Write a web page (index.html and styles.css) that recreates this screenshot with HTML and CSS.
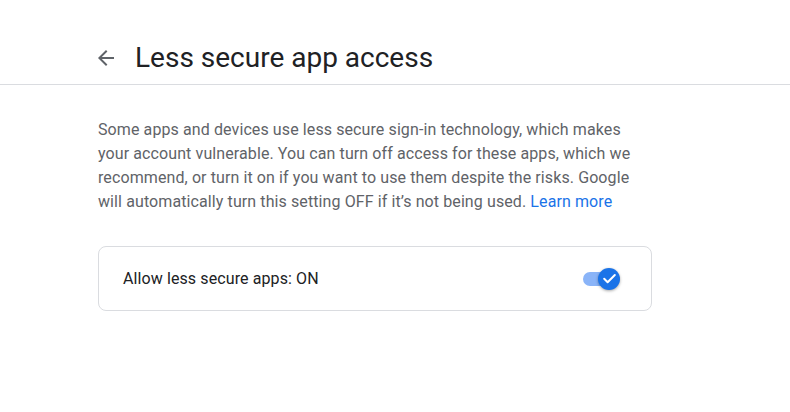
FILE: index.html
```html
<!DOCTYPE html>
<html>
<head>
<meta charset="utf-8">
<link rel="stylesheet" href="styles.css">
</head>
<body>
<header class="header">
  <div class="header-inner">
    <svg class="back" width="24" height="24" viewBox="0 0 24 24"><path d="M20 11H7.83l5.59-5.59L12 4l-8 8 8 8 1.41-1.41L7.83 13H20v-2z" fill="#5f6368"/></svg>
    <h1 class="title">Less secure app access</h1>
  </div>
</header>
<main class="content">
  <p class="desc">Some apps and devices use less secure sign-in technology, which makes your account vulnerable. You can turn off access for these apps, which we recommend, or turn it on if you want to use them despite the risks. Google will automatically turn this setting OFF if it’s not being used. <a class="link" href="#">Learn more</a></p>
  <div class="card">
    <span class="card-label">Allow less secure apps: ON</span>
    <div class="toggle">
      <div class="track"></div>
      <div class="knob">
        <svg width="15" height="15" viewBox="0 0 24 24"><path d="M3.5 12.5l5.5 5.5L20.5 6.5" fill="none" stroke="#fff" stroke-width="3.2" stroke-linecap="round" stroke-linejoin="round"/></svg>
      </div>
    </div>
  </div>
</main>
</body>
</html>
```
FILE: styles.css
```css
html, body {
  margin: 0;
  padding: 0;
  background: #fff;
  font-family: Roboto, "Liberation Sans", Arial, sans-serif;
}
.header {
  border-bottom: 1px solid #dadce0;
  height: 85px;
  box-sizing: border-box;
}
.header-inner {
  display: flex;
  align-items: center;
  padding: 38px 0 0 94px;
  height: 40px;
}
.back {
  display: block;
  margin-right: 17px;
}
.title {
  margin: 0;
  font-size: 28px;
  font-weight: 400;
  color: #202124;
  line-height: 40px;
}
.content {
  padding: 33px 0 0 98px;
  width: 554px;
}
.desc {
  margin: 0;
  font-size: 16px;
  letter-spacing: 0.1px;
  line-height: 24px;
  color: #5f6368;
}
.link {
  color: #1a73e8;
  text-decoration: none;
}
.card {
  margin-top: 32px;
  border: 1px solid #dadce0;
  border-radius: 8px;
  height: 65px;
  box-sizing: border-box;
  display: flex;
  align-items: center;
  justify-content: space-between;
  padding: 0 31px 0 24px;
}
.card-label {
  font-size: 16px;
  letter-spacing: 0.1px;
  color: #202124;
}
.toggle {
  position: relative;
  width: 38px;
  height: 22px;
}
.track {
  position: absolute;
  left: 1px;
  top: 4px;
  width: 28px;
  height: 14px;
  border-radius: 7px;
  background: #8ab4f8;
}
.knob {
  position: absolute;
  right: 0;
  top: 0;
  width: 22px;
  height: 22px;
  border-radius: 50%;
  background: #1a73e8;
  box-shadow: 0 1px 3px rgba(0,0,0,0.35);
  display: flex;
  align-items: center;
  justify-content: center;
}
.knob svg { display: block; }
```
